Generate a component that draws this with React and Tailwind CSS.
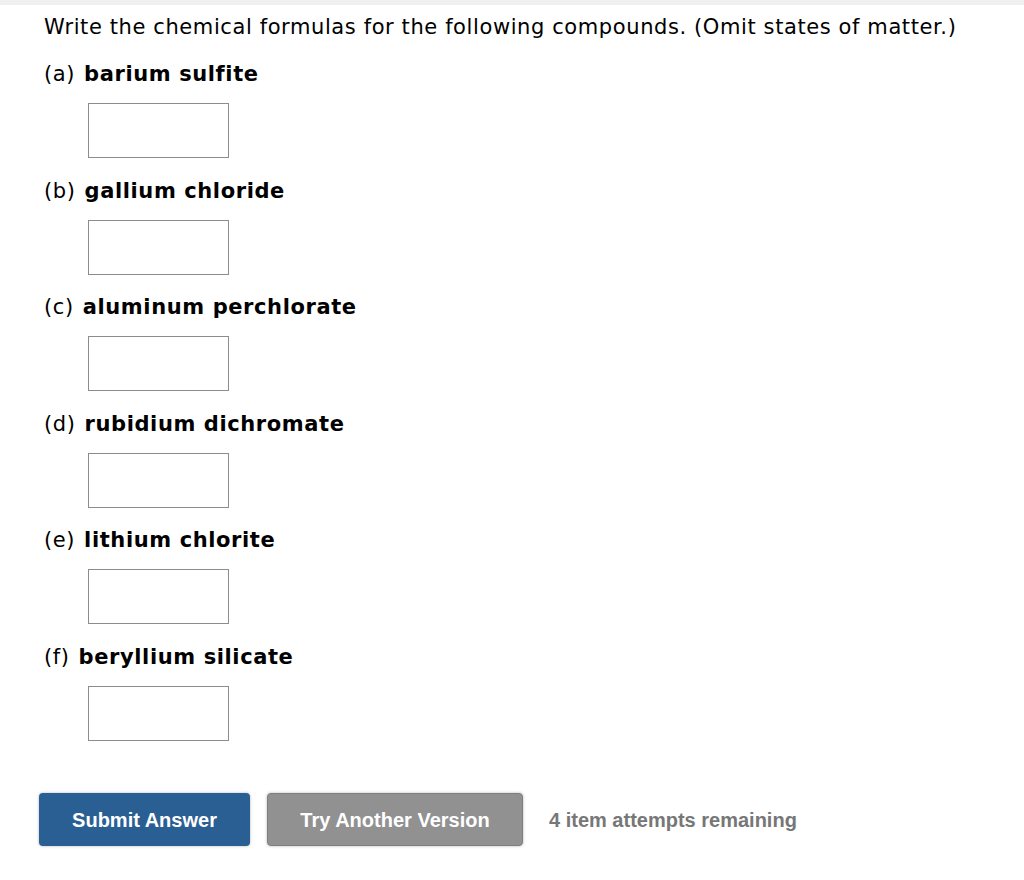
export default function App() {
  const items = [
    ['(a)', 'barium sulfite'],
    ['(b)', 'gallium chloride'],
    ['(c)', 'aluminum perchlorate'],
    ['(d)', 'rubidium dichromate'],
    ['(e)', 'lithium chlorite'],
    ['(f)', 'beryllium silicate'],
  ];

  return (
    <div className="min-h-[880px] w-[1024px] bg-white text-black">
      <div className="h-[5px] bg-[#f0f0f0]" />
      <div className="pl-[44px] pt-[10px]" style={{ fontFamily: '"DejaVu Sans", Verdana, sans-serif' }}>
        <p className="text-[21px] leading-[24px] tracking-[0.6px]">
          Write the chemical formulas for the following compounds. (Omit states of matter.)
        </p>
        <div className="mt-[23px]">
          {items.map(([letter, name]) => (
            <div key={letter} className="h-[116.5px]">
              <p className="text-[21px] leading-[24px] tracking-[0.6px]">
                {letter}
                <span className="ml-[9px] font-bold">{name}</span>
              </p>
              <div className="ml-[44px] mt-[17px] h-[55px] w-[141px] border border-[#8c8c8c] bg-white" />
            </div>
          ))}
        </div>
      </div>
      <div
        className="flex items-center pl-[39px] pt-[32px]"
        style={{ fontFamily: '"Liberation Sans", Arial, sans-serif' }}
      >
        <button className="h-[53px] w-[211px] rounded-[4px] bg-[#2a5f93] text-[20px] font-bold text-white shadow-[0_0_3px_rgba(0,0,0,0.3)]">
          Submit Answer
        </button>
        <button className="ml-[17px] h-[53px] w-[256px] rounded-[4px] border border-[#7f7f7f] bg-[#919191] text-[20px] font-bold text-white shadow-[0_0_3px_rgba(0,0,0,0.3)]">
          Try Another Version
        </button>
        <span className="ml-[26px] text-[20px] font-bold text-[#777777]">4 item attempts remaining</span>
      </div>
    </div>
  );
}
